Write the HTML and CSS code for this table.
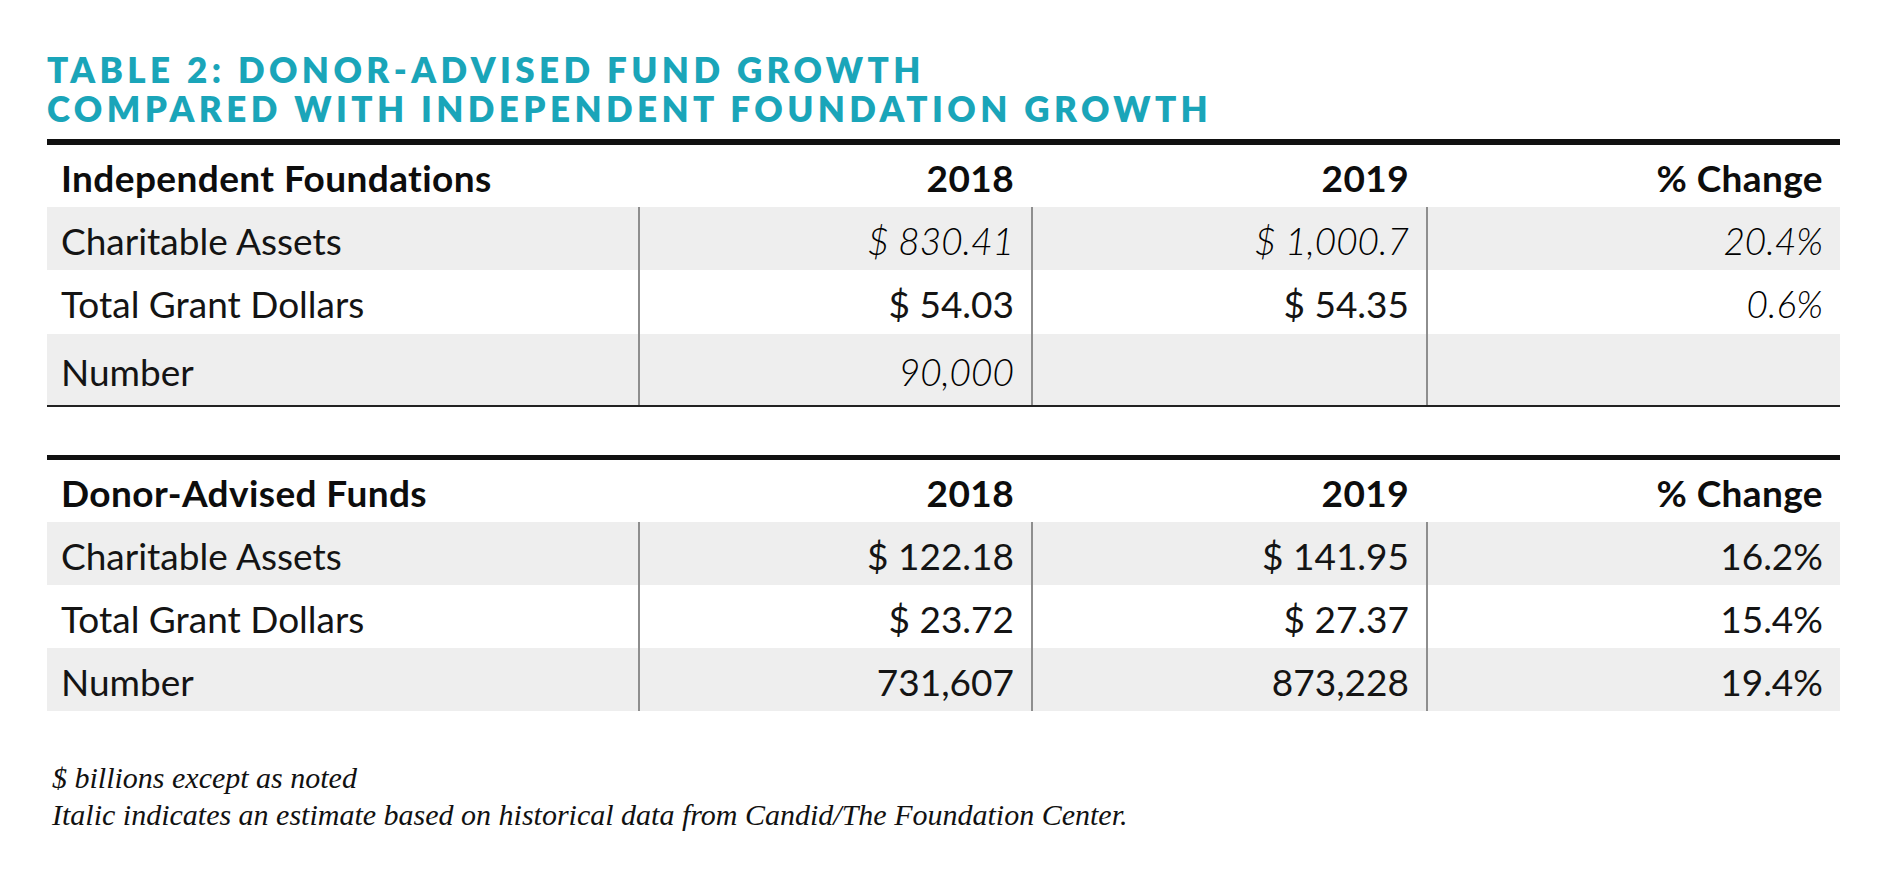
FILE: index.html
```html
<!DOCTYPE html>
<html lang="en">
<head>
<meta charset="utf-8">
<title>Table 2: Donor-Advised Fund Growth</title>
<link rel="stylesheet" href="styles.css">
</head>
<body>
<div class="page">
  <h1 class="title">TABLE 2: DONOR-ADVISED FUND GROWTH<br>COMPARED WITH INDEPENDENT FOUNDATION GROWTH</h1>

  <div class="dtable t1">
    <div class="row head">
      <div class="cell label">Independent Foundations</div>
      <div class="cell num">2018</div>
      <div class="cell num">2019</div>
      <div class="cell num">% Change</div>
    </div>
    <div class="row body shade ra">
      <div class="cell label">Charitable Assets</div>
      <div class="cell num div est">$ 830.41</div>
      <div class="cell num div est">$ 1,000.7</div>
      <div class="cell num div est">20.4%</div>
    </div>
    <div class="row body rb">
      <div class="cell label">Total Grant Dollars</div>
      <div class="cell num div">$ 54.03</div>
      <div class="cell num div">$ 54.35</div>
      <div class="cell num div est">0.6%</div>
    </div>
    <div class="row body shade rc">
      <div class="cell label">Number</div>
      <div class="cell num div est">90,000</div>
      <div class="cell num div"></div>
      <div class="cell num div"></div>
    </div>
  </div>

  <div class="dtable t2">
    <div class="row head">
      <div class="cell label">Donor-Advised Funds</div>
      <div class="cell num">2018</div>
      <div class="cell num">2019</div>
      <div class="cell num">% Change</div>
    </div>
    <div class="row body shade ra">
      <div class="cell label">Charitable Assets</div>
      <div class="cell num div">$ 122.18</div>
      <div class="cell num div">$ 141.95</div>
      <div class="cell num div">16.2%</div>
    </div>
    <div class="row body ra">
      <div class="cell label">Total Grant Dollars</div>
      <div class="cell num div">$ 23.72</div>
      <div class="cell num div">$ 27.37</div>
      <div class="cell num div">15.4%</div>
    </div>
    <div class="row body shade ra">
      <div class="cell label">Number</div>
      <div class="cell num div">731,607</div>
      <div class="cell num div">873,228</div>
      <div class="cell num div">19.4%</div>
    </div>
  </div>

  <div class="notes">
    <p>$ billions except as noted</p>
    <p>Italic indicates an estimate based on historical data from Candid/The Foundation Center.</p>
  </div>
</div>
</body>
</html>
```

FILE: styles.css
```css
* { box-sizing: border-box; }

html, body {
  margin: 0;
  padding: 0;
  background: #ffffff;
}

.page {
  padding: 50px 0 0 47px;
  width: 1840px;
  font-family: "Lato", "Liberation Sans", sans-serif;
  color: #111111;
}

.title {
  margin: 0 0 11px 0;
  font-family: "Lato", "Liberation Sans", sans-serif;
  font-weight: 800;
  font-size: 35px;
  line-height: 39px;
  letter-spacing: 4.4px;
  color: #1aa5b9;
}

.dtable {
  width: 1793px;
}

.t1 {
  border-top: 6px solid #111111;
  border-bottom: 2px solid #222222;
}

.t2 {
  margin-top: 48px;
  border-top: 5px solid #111111;
}

.row {
  display: grid;
  grid-template-columns: 591px 393px 395px 414px;
}

.cell {
  white-space: nowrap;
}

.cell.label {
  padding-left: 14px;
}

.cell.num {
  text-align: right;
  padding-right: 17px;
}

.head {
  height: 62px;
  padding-top: 3px;
  font-size: 37px;
  line-height: 59px;
  letter-spacing: 0.4px;
  font-weight: 700;
  color: #0d0d0d;
}

.body {
  font-size: 37px;
  font-weight: 400;
  color: #141414;
}

.shade {
  background: #eeeeee;
}

.ra {
  height: 63px;
  padding-top: 4px;
  line-height: 59px;
}

.rb {
  height: 64px;
  padding-top: 4px;
  line-height: 60px;
}

.rc {
  height: 71px;
  padding-top: 6px;
  line-height: 63px;
}

.ra .cell { margin-top: -4px; padding-top: 4px; }
.rb .cell { margin-top: -4px; padding-top: 4px; }
.rc .cell { margin-top: -6px; padding-top: 6px; }

.cell.div {
  border-left: 2px solid #8e8e8e;
}

.cell.est {
  font-style: italic;
  font-weight: 300;
  color: #000000;
}

.notes {
  margin-top: 48px;
  padding-left: 5px;
  font-family: "Liberation Serif", "Times New Roman", serif;
  font-style: italic;
  font-size: 30px;
  line-height: 37px;
  color: #111111;
}

.notes p {
  margin: 0;
}
```
